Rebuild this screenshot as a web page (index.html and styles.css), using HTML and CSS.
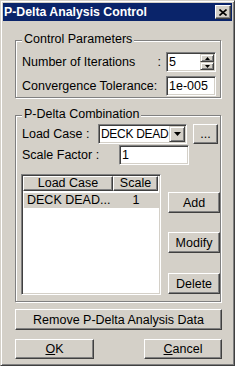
FILE: index.html
```html
<!DOCTYPE html>
<html lang="en">
<head>
  <meta charset="UTF-8">
  <title>P-Delta Analysis Control</title>
  <link rel="stylesheet" href="styles.css">
</head>
<body>

  <div class="window">
    <div class="titlebar">
      <span class="title">P-Delta Analysis Control</span>
      <button class="close-btn">
        <svg width="8" height="7" viewBox="0 0 8 7"><path d="M0.5 0.5 L7.5 6.5 M7.5 0.5 L0.5 6.5" stroke="#000" stroke-width="1.6" fill="none"/></svg>
      </button>
    </div>

    <div class="content">
      <!-- control parameters -->
      <div class="group params">
        <span class="group-title">Control Parameters</span>
        <div class="row">
          <span class="label">Number of Iterations</span>
          <span class="colon">:</span>
          <div class="field spin">
            <span class="value">5</span>
            <div class="spin-btns">
              <span class="spin-btn"><svg width="5" height="3" viewBox="0 0 5 3"><polygon points="0,3 2.5,0 5,3" fill="#000"/></svg></span>
              <span class="spin-btn"><svg width="5" height="3" viewBox="0 0 5 3"><polygon points="0,0 5,0 2.5,3" fill="#000"/></svg></span>
            </div>
          </div>
        </div>
        <div class="row">
          <span class="label">Convergence Tolerance:</span>
          <div class="field tol"><span class="value">1e-005</span></div>
        </div>
      </div>

      <!-- p-delta combination -->
      <div class="group combo-group">
        <span class="group-title">P-Delta Combination</span>
        <div class="row">
          <span class="label load-label">Load Case :</span>
          <div class="field combo">
            <span class="value combo-value">DECK DEAD</span>
            <span class="drop-btn"><svg width="7" height="4" viewBox="0 0 7 4"><polygon points="0,0 7,0 3.5,4" fill="#000"/></svg></span>
          </div>
          <button class="btn dots-btn">...</button>
        </div>
        <div class="row scale-row">
          <span class="label scale-label">Scale Factor :</span>
          <div class="field scale"><span class="value">1</span></div>
        </div>

        <div class="list-area">
          <div class="listview">
            <div class="list-head">
              <span class="head-cell col-name">Load Case</span>
              <span class="head-cell col-scale">Scale</span>
            </div>
            <div class="list-body">
              <div class="list-row selected">
                <span class="cell col-name">DECK DEAD...</span>
                <span class="cell col-scale">1</span>
              </div>
            </div>
          </div>
          <div class="side-btns">
            <button class="btn side-btn add-btn">Add</button>
            <button class="btn side-btn modify-btn">Modify</button>
            <button class="btn side-btn delete-btn">Delete</button>
          </div>
        </div>
      </div>

      <button class="btn remove-btn">Remove P-Delta Analysis Data</button>

      <div class="footer">
        <button class="btn ok-btn"><u>O</u>K</button>
        <button class="btn cancel-btn"><u>C</u>ancel</button>
      </div>
    </div>
  </div>

</body>
</html>
```

FILE: styles.css
```css
* {
  box-sizing: border-box;
}

body {
  margin: 0;
  font-family: "Liberation Sans", Arial, sans-serif;
  font-size: 12.5px;
  color: #000;
}

.window {
  width: 235px;
  height: 366px;
  background: #d4d0c8;
  border: 1px solid;
  border-color: #d4d0c8 #404040 #404040 #d4d0c8;
  box-shadow: inset 1px 1px #fff, inset -1px -1px #808080;
  padding: 2px;
}

.titlebar {
  height: 18px;
  background: #0a246a;
  color: #fff;
  display: flex;
  align-items: center;
  justify-content: space-between;
  padding: 0 1px 0 1px;
}

.title {
  font-weight: bold;
  font-size: 12.3px;
}

.close-btn {
  width: 16px;
  height: 14px;
  padding: 0;
  background: #d4d0c8;
  border: 1px solid;
  border-color: #fff #404040 #404040 #fff;
  box-shadow: inset -1px -1px #808080;
  display: flex;
  align-items: center;
  justify-content: center;
}

.content {
  padding: 19px 11px 0 12px;
}

/* etched group box */
.group {
  position: relative;
  border: 1px solid #808080;
  box-shadow: inset 1px 1px #fff, 1px 1px #fff;
}

.group-title {
  position: absolute;
  top: -9px;
  left: 6px;
  line-height: 14px;
  padding: 0 2px;
  background: #d4d0c8;
}

.params {
  display: flex;
  flex-direction: column;
  gap: 4px;
  padding: 11px 4px 1px 6px;
}

.row {
  display: flex;
  align-items: center;
  height: 20px;
}

.label {
  flex: 1;
  white-space: nowrap;
}

.colon {
  margin-right: 5px;
}

/* sunken edit field */
.field {
  height: 20px;
  padding: 1px;
  display: flex;
  align-items: center;
  background: #fff;
  border: 1px solid;
  border-color: #808080 #fff #fff #808080;
  box-shadow: inset 1px 1px #404040, inset -1px -1px #d4d0c8;
  flex-shrink: 0;
}

.value {
  flex: 1;
  padding-left: 1px;
  white-space: nowrap;
  overflow: hidden;
}

.combo-value {
  font-size: 12px;
  letter-spacing: -0.3px;
}

.spin,
.tol {
  width: 50px;
}

.spin-btns {
  display: flex;
  flex-direction: column;
  width: 14px;
  height: 16px;
}

.spin-btn,
.drop-btn {
  display: flex;
  align-items: center;
  justify-content: center;
  background: #d4d0c8;
  border: 1px solid;
  border-color: #d4d0c8 #404040 #404040 #d4d0c8;
  box-shadow: inset 1px 1px #fff, inset -1px -1px #808080;
}

.spin-btn {
  height: 8px;
}

.combo-group {
  margin-top: 17px;
  padding: 8px 4px 6px 6px;
}

.load-label {
  flex: 0 0 76px;
}

.combo {
  width: 89px;
}

.drop-btn {
  width: 16px;
  height: 16px;
  flex-shrink: 0;
}

.btn {
  padding: 0;
  font-family: inherit;
  font-size: 12.5px;
  color: #000;
  background: #d4d0c8;
  border: 1px solid;
  border-color: #fff #404040 #404040 #fff;
  box-shadow: inset -1px -1px #808080;
}

.dots-btn {
  width: 25px;
  height: 20px;
  margin-left: 6px;
  flex-shrink: 0;
}

.scale-row {
  margin-top: 1px;
}

.scale-label {
  flex: 0 0 97px;
}

.scale {
  width: 70px;
}

.list-area {
  display: flex;
  margin-top: 9px;
}

.listview {
  width: 140px;
  height: 121px;
  margin-left: -1px;
  flex-shrink: 0;
  padding: 1px;
  background: #fff;
  border: 1px solid;
  border-color: #808080 #fff #fff #808080;
  box-shadow: inset 1px 1px #404040, inset -1px -1px #d4d0c8;
}

.list-head {
  display: flex;
  height: 15px;
}

.head-cell {
  height: 15px;
  line-height: 13px;
  text-align: center;
  background: #d4d0c8;
  border: 1px solid;
  border-color: #fff #404040 #404040 #fff;
  box-shadow: inset -1px -1px #808080;
}

.head-cell.col-name {
  width: 90px;
}

.head-cell.col-scale {
  width: 45px;
}

.list-body {
  padding: 2px 0 0 1px;
}

.list-row {
  display: flex;
  width: 135px;
  height: 15px;
  line-height: 15px;
}

.list-row.selected {
  background: #d4d0c8;
}

.cell.col-name {
  width: 89px;
  padding-left: 3px;
  white-space: nowrap;
}

.cell.col-scale {
  width: 46px;
  text-align: center;
}

.side-btns {
  display: flex;
  flex-direction: column;
  margin-left: 7px;
  flex-shrink: 0;
}

.side-btn {
  width: 52px;
  height: 21px;
}

.add-btn {
  margin-top: 18px;
}

.modify-btn {
  margin-top: 19px;
}

.delete-btn {
  margin-top: 20px;
}

.remove-btn {
  display: block;
  width: 207px;
  height: 21px;
  margin-top: 7px;
}

.footer {
  display: flex;
  justify-content: space-between;
  width: 207px;
  margin-top: 9px;
}

.ok-btn {
  width: 79px;
  height: 20px;
}

.cancel-btn {
  width: 78px;
  height: 20px;
}
```
